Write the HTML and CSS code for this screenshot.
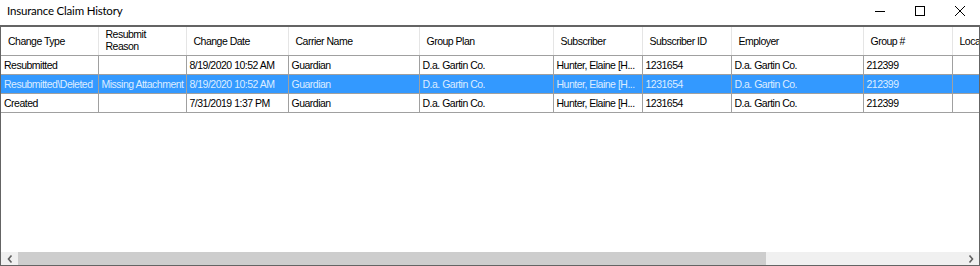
FILE: index.html
```html
<!DOCTYPE html>
<html>
<head>
<meta charset="utf-8">
<link rel="stylesheet" href="styles.css">
</head>
<body>
<div class="window">
  <div class="titlebar">
    <span class="title">Insurance Claim History</span>
    <div class="controls">
      <span class="ctl"><svg width="10" height="10" viewBox="0 0 10 10"><line x1="0" y1="5.5" x2="10" y2="5.5" stroke="#000" stroke-width="1"/></svg></span>
      <span class="ctl"><svg width="10" height="10" viewBox="0 0 10 10"><rect x="0.5" y="0.5" width="9" height="9" fill="none" stroke="#000" stroke-width="1"/></svg></span>
      <span class="ctl"><svg width="10" height="10" viewBox="0 0 10 10"><path d="M0 0 L10 10 M10 0 L0 10" stroke="#000" stroke-width="1"/></svg></span>
    </div>
  </div>
  <div class="grid">
    <div class="table-area">
      <table class="data">
        <colgroup>
          <col class="c1"><col class="c2"><col class="c3"><col class="c4"><col class="c5"><col class="c6"><col class="c7"><col class="c8"><col class="c9"><col class="c10">
        </colgroup>
        <thead>
          <tr>
            <th>Change Type</th>
            <th class="two">Resubmit<br>Reason</th>
            <th>Change Date</th>
            <th>Carrier Name</th>
            <th>Group Plan</th>
            <th>Subscriber</th>
            <th>Subscriber ID</th>
            <th>Employer</th>
            <th>Group #</th>
            <th>Local</th>
          </tr>
        </thead>
        <tbody>
          <tr>
            <td>Resubmitted</td><td></td><td>8/19/2020 10:52 AM</td><td>Guardian</td><td>D.a. Gartin Co.</td><td>Hunter, Elaine [H...</td><td>1231654</td><td>D.a. Gartin Co.</td><td>212399</td><td></td>
          </tr>
          <tr class="sel">
            <td>Resubmitted\Deleted</td><td>Missing Attachment</td><td>8/19/2020 10:52 AM</td><td>Guardian</td><td>D.a. Gartin Co.</td><td>Hunter, Elaine [H...</td><td>1231654</td><td>D.a. Gartin Co.</td><td>212399</td><td></td>
          </tr>
          <tr>
            <td>Created</td><td></td><td>7/31/2019 1:37 PM</td><td>Guardian</td><td>D.a. Gartin Co.</td><td>Hunter, Elaine [H...</td><td>1231654</td><td>D.a. Gartin Co.</td><td>212399</td><td></td>
          </tr>
        </tbody>
      </table>
    </div>
    <div class="hscroll">
      <span class="arrow"><svg width="6" height="8" viewBox="0 0 6 8"><path d="M4.5 0.5 L1.5 4 L4.5 7.5" fill="none" stroke="#606060" stroke-width="1.6"/></svg></span>
      <div class="track"><div class="thumb"></div></div>
      <span class="arrow"><svg width="6" height="8" viewBox="0 0 6 8"><path d="M1.5 0.5 L4.5 4 L1.5 7.5" fill="none" stroke="#606060" stroke-width="1.6"/></svg></span>
    </div>
  </div>
</div>
</body>
</html>
```
FILE: styles.css
```css
html, body {
  margin: 0;
  padding: 0;
  background: #ffffff;
}
.window {
  width: 980px;
  height: 266px;
  display: flex;
  flex-direction: column;
  background: #ffffff;
}
.titlebar {
  height: 25px;
  display: flex;
  align-items: center;
  justify-content: space-between;
  flex: none;
}
.title {
  font-family: Lato, "Noto Sans", sans-serif;
  font-size: 11.5px;
  letter-spacing: -0.2px;
  color: #000;
  padding-left: 7px;
  margin-top: -4px;
}
.controls {
  display: flex;
  margin-top: -4px;
}
.ctl {
  width: 40px;
  height: 20px;
  display: flex;
  align-items: center;
  justify-content: center;
}
.ctl svg { display: block; }
.grid {
  flex: none;
  height: 238px;
  width: 978px;
  border: 1px solid #646464;
  border-top: 2px solid #646464;
  display: flex;
  flex-direction: column;
}
.table-area {
  flex: 1;
  overflow: hidden;
  background: #fff;
}
.data {
  table-layout: fixed;
  border-collapse: collapse;
  width: 1030px;
  font-family: "Liberation Sans", Arial, sans-serif;
  font-size: 10.5px;
  letter-spacing: -0.5px;
  color: #000;
}
.c1 { width: 97px; }
.c2 { width: 88px; }
.c3 { width: 102px; }
.c4 { width: 131px; }
.c5 { width: 134px; }
.c6 { width: 89px; }
.c7 { width: 89px; }
.c8 { width: 132px; }
.c9 { width: 89px; }
.c10 { width: 79px; }
.data th {
  height: 27px;
  padding: 0 0 0 7px;
  font-weight: normal;
  text-align: left;
  white-space: nowrap;
  overflow: hidden;
  border-right: 1px solid #e5e5e5;
  border-bottom: 1px solid #a0a0a0;
  line-height: 12px;
}
.data th.two {
  vertical-align: top;
  padding-top: 1px;
}
.data td {
  height: 18px;
  padding: 0 0 0 3px;
  white-space: nowrap;
  overflow: hidden;
  border-right: 1px solid #a0a0a0;
  border-bottom: 1px solid #a0a0a0;
}
.data tr.sel td {
  background: #3399ff;
  color: #dcecff;
}
.hscroll {
  flex: none;
  height: 13px;
  display: flex;
  background: #f0f0f0;
}
.arrow {
  width: 17px;
  display: flex;
  align-items: center;
  justify-content: center;
  flex: none;
}
.track {
  flex: 1;
  display: flex;
}
.thumb {
  width: 748px;
  background: #cdcdcd;
}
```
